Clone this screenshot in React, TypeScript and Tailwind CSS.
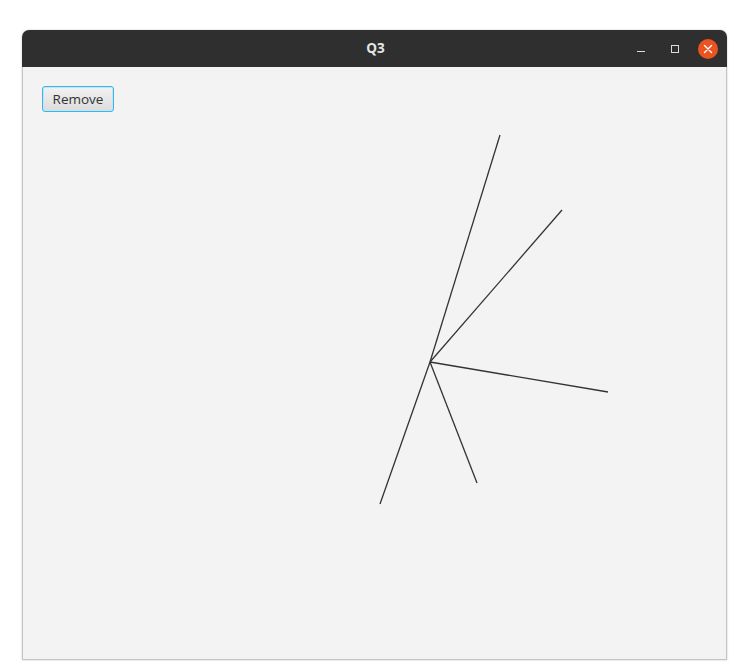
import React from 'react';

const LINES: [number, number][] = [
  [477, 68],
  [539, 143],
  [585, 325],
  [454, 416],
  [357, 437],
];
const HUB: [number, number] = [407, 295];

export default function App() {
  return (
    <div className="w-[749px] h-[665px] bg-white pt-[30px] pl-[22px]" style={{ fontFamily: '"Open Sans", "DejaVu Sans", sans-serif' }}>
      <div className="w-[705px] h-[630px] flex flex-col rounded-t-[7px] overflow-hidden shadow-[0_0_2px_rgba(0,0,0,0.25)]">
        <div className="h-[37px] bg-[#2f2f2f] flex items-center relative">
          <div className="flex-1 text-center text-[13.5px] font-bold text-[#e6e6e6] pl-[2px]">Q3</div>
          <div className="absolute right-[9px] top-0 h-full flex items-center">
            <div className="w-[34px] flex justify-center pt-[6px]">
              <div className="w-[8px] h-[1px] bg-[#dcdcdc]" />
            </div>
            <div className="w-[34px] flex justify-center">
              <div className="w-[8px] h-[8px] border border-[#dcdcdc]" />
            </div>
            <div className="w-[20px] h-[20px] rounded-full bg-[#e95420] flex items-center justify-center ml-[6px]">
              <svg width="10" height="10" viewBox="0 0 10 10">
                <path d="M1.5 1.5 L8.5 8.5 M8.5 1.5 L1.5 8.5" stroke="#fff" strokeWidth="1.4" strokeLinecap="round" />
              </svg>
            </div>
          </div>
        </div>
        <div className="flex-1 bg-[#f3f3f3] border-x border-b border-[#c4c4c4] relative pt-[19px] pl-[19px]">
          <svg className="absolute inset-0" width="703" height="592">
            {LINES.map(([x, y], i) => (
              <line key={i} x1={HUB[0]} y1={HUB[1]} x2={x} y2={y} stroke="#333" strokeWidth="1.3" />
            ))}
          </svg>
          <button className="relative w-[72px] h-[26px] rounded-[3px] border border-[#3db4e6] bg-gradient-to-b from-[#f2f2f2] to-[#dcdcdc] text-[13.5px] text-[#333] shadow-[inset_0_0_0_1px_#bfe6f7]" style={{ fontFamily: '"Open Sans", "DejaVu Sans", sans-serif' }}>
            Remove
          </button>
        </div>
      </div>
    </div>
  );
}
